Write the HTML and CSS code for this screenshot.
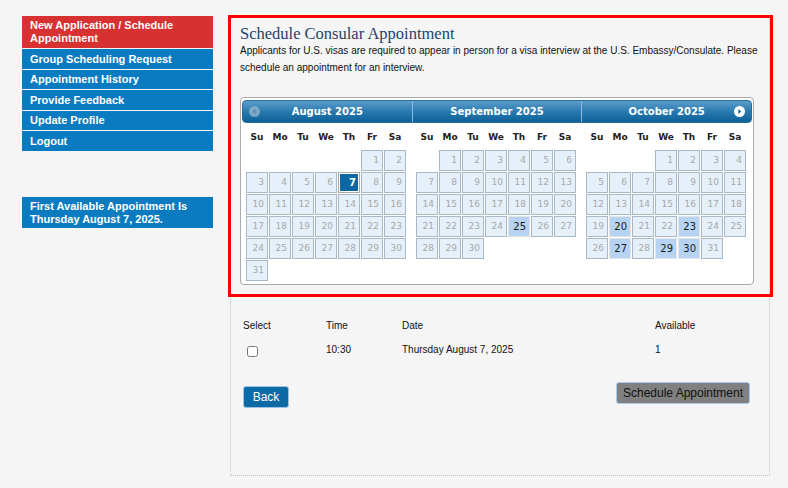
FILE: index.html
```html
<html>
	<head>
		<title>Schedule Consular Appointment</title>
		<link rel="stylesheet" href="styles.css">
	</head>
	<body>
		<div class="page">
			<div class="sidebar">
				<div class="menu">
					<a class="item active" href="#">New Application / Schedule Appointment</a>
					<a class="item" href="#">Group Scheduling Request</a>
					<a class="item" href="#">Appointment History</a>
					<a class="item" href="#">Provide Feedback</a>
					<a class="item" href="#">Update Profile</a>
					<a class="item" href="#">Logout</a>
				</div>
				<div class="firstavail">First Available Appointment Is Thursday August 7, 2025.</div>
			</div>

			<div class="panel">
				<div class="highlight"></div>
				<h1>Schedule Consular Appointment</h1>
				<p class="intro">Applicants for U.S. visas are required to appear in person for a visa interview at the U.S. Embassy/Consulate. Please schedule an appointment for an interview.</p>

				<div class="datepicker">
					<div class="dphead">
						<div class="dptitle">
							<svg class="nav prev" width="11" height="11" viewBox="0 0 11 11"><circle cx="5.5" cy="5.5" r="5.5" fill="#8fb3cf"/><path d="M6.6 3 L3.8 5.5 L6.6 8 Z" fill="#5d8fb6"/></svg>
							August 2025
						</div>
						<div class="dptitle">September 2025</div>
						<div class="dptitle">
							October 2025
							<svg class="nav next" width="11" height="11" viewBox="0 0 11 11"><circle cx="5.5" cy="5.5" r="5.5" fill="#ffffff"/><path d="M4.4 3 L7.2 5.5 L4.4 8 Z" fill="#0d629a"/></svg>
						</div>
					</div>
					<div class="dpbody">
						<!-- August -->
						<div class="month">
							<div class="dow"><span>Su</span><span>Mo</span><span>Tu</span><span>We</span><span>Th</span><span>Fr</span><span>Sa</span></div>
							<div class="days">
								<div class="e"></div><div class="e"></div><div class="e"></div><div class="e"></div><div class="e"></div><div class="d">1</div><div class="d">2</div>
								<div class="d">3</div><div class="d">4</div><div class="d">5</div><div class="d">6</div><div class="d sel">7</div><div class="d">8</div><div class="d">9</div>
								<div class="d">10</div><div class="d">11</div><div class="d">12</div><div class="d">13</div><div class="d">14</div><div class="d">15</div><div class="d">16</div>
								<div class="d">17</div><div class="d">18</div><div class="d">19</div><div class="d">20</div><div class="d">21</div><div class="d">22</div><div class="d">23</div>
								<div class="d">24</div><div class="d">25</div><div class="d">26</div><div class="d">27</div><div class="d">28</div><div class="d">29</div><div class="d">30</div>
								<div class="d">31</div>
							</div>
						</div>
						<!-- September -->
						<div class="month">
							<div class="dow"><span>Su</span><span>Mo</span><span>Tu</span><span>We</span><span>Th</span><span>Fr</span><span>Sa</span></div>
							<div class="days">
								<div class="e"></div><div class="d">1</div><div class="d">2</div><div class="d">3</div><div class="d">4</div><div class="d">5</div><div class="d">6</div>
								<div class="d">7</div><div class="d">8</div><div class="d">9</div><div class="d">10</div><div class="d">11</div><div class="d">12</div><div class="d">13</div>
								<div class="d">14</div><div class="d">15</div><div class="d">16</div><div class="d">17</div><div class="d">18</div><div class="d">19</div><div class="d">20</div>
								<div class="d">21</div><div class="d">22</div><div class="d">23</div><div class="d">24</div><div class="d av">25</div><div class="d">26</div><div class="d">27</div>
								<div class="d">28</div><div class="d">29</div><div class="d">30</div>
							</div>
						</div>
						<!-- October -->
						<div class="month">
							<div class="dow"><span>Su</span><span>Mo</span><span>Tu</span><span>We</span><span>Th</span><span>Fr</span><span>Sa</span></div>
							<div class="days">
								<div class="e"></div><div class="e"></div><div class="e"></div><div class="d">1</div><div class="d">2</div><div class="d">3</div><div class="d">4</div>
								<div class="d">5</div><div class="d">6</div><div class="d">7</div><div class="d">8</div><div class="d">9</div><div class="d">10</div><div class="d">11</div>
								<div class="d">12</div><div class="d">13</div><div class="d">14</div><div class="d">15</div><div class="d">16</div><div class="d">17</div><div class="d">18</div>
								<div class="d">19</div><div class="d av">20</div><div class="d">21</div><div class="d">22</div><div class="d av">23</div><div class="d">24</div><div class="d">25</div>
								<div class="d">26</div><div class="d av">27</div><div class="d">28</div><div class="d av">29</div><div class="d av">30</div><div class="d">31</div>
							</div>
						</div>
					</div>
				</div>

				<table class="slots">
					<tr>
						<th class="c1">Select</th>
						<th class="c2">Time</th>
						<th class="c3">Date</th>
						<th>Available</th>
					</tr>
					<tr>
						<td><input type="checkbox" class="check"></td>
						<td>10:30</td>
						<td>Thursday August 7, 2025</td>
						<td>1</td>
					</tr>
				</table>

				<div class="actions">
					<button class="back">Back</button>
					<button class="schedule">Schedule Appointment</button>
				</div>
			</div>
		</div>
	</body>
</html>
```

FILE: styles.css
```css
body{
	margin: 0;
	background-color: #f5f5f5;
	font-family: "Liberation Sans", Arial, sans-serif;
	font-size: 10px;
	color: #111;
}
a{
	text-decoration: none;
	color: white;
}

div.page{
	display: flex;
	align-items: flex-start;
	gap: 17px;
	padding: 15px 0 0 22px;
}

/* left menu */
div.sidebar{
	width: 191px;
	margin-top: 1px;
}
div.menu{
	display: flex;
	flex-direction: column;
	gap: 1px;
}
a.item, div.firstavail{
	display: block;
	background-color: #0b7bc1;
	color: white;
	font-weight: bold;
	font-size: 11px;
	line-height: 13px;
	padding: 3.5px 8px 3px;
}
a.item.active{
	background-color: #d73131;
	padding: 3px 8px 3px;
}
div.firstavail{
	margin-top: 46px;
	padding: 3px 8px 2px;
}

/* main panel */
div.panel{
	position: relative;
	width: 529px;
	min-height: 450px;
	border: 1px dotted #c4c4c4;
	padding: 9px 0 0 9px;
}
div.highlight{
	position: absolute;
	left: -3px;
	top: -1px;
	width: 545px;
	height: 282px;
	box-sizing: border-box;
	border: 3px solid #ff0000;
	pointer-events: none;
}
h1{
	margin: 0;
	font-family: "Liberation Serif", Georgia, serif;
	font-weight: normal;
	font-size: 16.5px;
	line-height: 17px;
	color: #23446b;
}
p.intro{
	margin: 0 0 21px;
	line-height: 17px;
	padding-right: 4px;
}

/* calendar */
div.datepicker{
	width: 510px;
	background-color: white;
	border: 1px solid #aaaaaa;
	border-radius: 4px;
	padding: 2px 1px 0;
}
div.dphead{
	display: flex;
	height: 23px;
	border-radius: 4px;
	background: linear-gradient(#5b9dcc, #2a7ab0 50%, #0b6198);
	border: 1px solid #2a6f9c;
	box-sizing: border-box;
}
div.dptitle{
	position: relative;
	flex: 1;
	text-align: center;
	color: white;
	font-family: "DejaVu Sans", Verdana, sans-serif;
	font-weight: bold;
	font-size: 10px;
	line-height: 22px;
	border-left: 1px solid #8fbadb;
}
div.dptitle:first-child{
	border-left: none;
}
svg.nav{
	position: absolute;
	top: 5px;
}
svg.prev{
	left: 6px;
	opacity: 0.8;
}
svg.next{
	right: 6px;
}
div.dpbody{
	display: flex;
	height: 161px;
}
div.month{
	width: 170px;
	padding: 3px 4px 0;
	box-sizing: border-box;
}
div.dow{
	display: grid;
	grid-template-columns: repeat(7, 22px);
	column-gap: 1px;
	height: 24px;
	font-family: "DejaVu Sans", Verdana, sans-serif;
	font-weight: bold;
	font-size: 9px;
	line-height: 22px;
	color: #222;
	text-align: center;
}
div.days{
	display: grid;
	grid-template-columns: repeat(7, 22px);
	grid-auto-rows: 21px;
	gap: 1px;
}
div.d{
	box-sizing: border-box;
	border: 1px solid #a9b8c3;
	background-color: #e6f0fa;
	color: #a8a8a8;
	font-family: "DejaVu Sans", Verdana, sans-serif;
	font-size: 9px;
	line-height: 19px;
	text-align: right;
	padding-right: 3px;
}
div.d.av{
	border-color: #e4e4e4;
	background-color: #b6d4f2;
	color: #1a1a1a;
	font-size: 10px;
}
div.d.sel{
	border: 1px solid #aaaaaa;
	box-shadow: inset 0 0 0 1px #ffffff;
	background-color: #0d67a2;
	color: white;
	font-weight: bold;
	font-size: 10px;
}

/* time slots */
table.slots{
	margin: 28px 0 0 3px;
	width: 510px;
	border-collapse: collapse;
	table-layout: fixed;
	font-size: 10px;
}
table.slots th, table.slots td{
	text-align: left;
	font-weight: normal;
	padding: 0;
	height: 24px;
	vertical-align: middle;
}
th.c1{ width: 83px; }
th.c2{ width: 76px; }
th.c3{ width: 253px; }
input.check{
	margin: 4px 0 0 4px;
	width: 11px;
	height: 11px;
}

div.actions{
	display: flex;
	justify-content: space-between;
	align-items: flex-start;
	width: 507px;
	margin: 21px 0 0 3px;
}
button{
	font-family: "Liberation Sans", Arial, sans-serif;
	font-size: 12px;
	height: 22px;
	border-radius: 3px;
	cursor: pointer;
	padding: 0;
}
button.back{
	margin-top: 4px;
	width: 46px;
	background-color: #0d6aa5;
	color: white;
	border: 1px solid #9cc4e8;
}
button.schedule{
	width: 134px;
	background-color: #808080;
	color: #111;
	border: 1px solid #a9cbee;
}
```
